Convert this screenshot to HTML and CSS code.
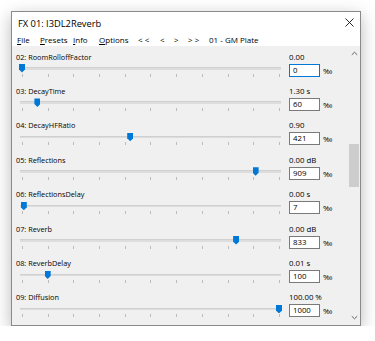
FILE: index.html
```html
<!DOCTYPE html>
<html lang="en">

<head>
    <meta charset="UTF-8">
    <title>FX 01: I3DL2Reverb</title>
    <link rel="stylesheet" href="styles.css">
</head>

<body>
    <!-- Dialog window -->
    <div class="window">
        <div class="titlebar">
            <span class="title">FX 01: I3DL2Reverb</span>
            <svg class="close" width="9" height="9" viewBox="0 0 9 9">
                <path d="M0.5 0.5 L8.5 8.5 M8.5 0.5 L0.5 8.5" stroke="#111" stroke-width="0.9" fill="none" />
            </svg>
        </div>

        <!-- Menu -->
        <div class="menubar">
            <span class="menu-item m-file"><u>F</u>ile</span>
            <span class="menu-item m-presets"><u>P</u>resets</span>
            <span class="menu-item m-info"><u>I</u>nfo</span>
            <span class="menu-item m-options"><u>O</u>ptions</span>
            <span class="menu-item m-prev2">&lt; &lt;</span>
            <span class="menu-item m-prev">&lt;</span>
            <span class="menu-item m-next">&gt;</span>
            <span class="menu-item m-next2">&gt; &gt;</span>
            <span class="menu-item">01 - GM Plate</span>
        </div>

        <!-- Parameters -->
        <div class="content">
            <div class="params">
                <div class="param">
                    <span class="param-name">02: RoomRolloffFactor</span>
                    <span class="param-value">0.00</span>
                    <div class="slider">
                        <div class="track"></div>
                        <div class="ticks"><i></i><i></i><i></i><i></i><i></i><i></i><i></i><i></i><i></i><i></i><i></i></div>
                        <div class="thumb" style="left: -1px"></div>
                    </div>
                    <div class="input focused">0</div>
                    <span class="unit">‰</span>
                </div>
                <div class="param">
                    <span class="param-name">03: DecayTime</span>
                    <span class="param-value">1.30 s</span>
                    <div class="slider">
                        <div class="track"></div>
                        <div class="ticks"><i></i><i></i><i></i><i></i><i></i><i></i><i></i><i></i><i></i><i></i><i></i></div>
                        <div class="thumb" style="left: 14.4px"></div>
                    </div>
                    <div class="input">60</div>
                    <span class="unit">‰</span>
                </div>
                <div class="param">
                    <span class="param-name">04: DecayHFRatio</span>
                    <span class="param-value">0.90</span>
                    <div class="slider">
                        <div class="track"></div>
                        <div class="ticks"><i></i><i></i><i></i><i></i><i></i><i></i><i></i><i></i><i></i><i></i><i></i></div>
                        <div class="thumb" style="left: 107.2px"></div>
                    </div>
                    <div class="input">421</div>
                    <span class="unit">‰</span>
                </div>
                <div class="param">
                    <span class="param-name">05: Reflections</span>
                    <span class="param-value">0.00 dB</span>
                    <div class="slider">
                        <div class="track"></div>
                        <div class="ticks"><i></i><i></i><i></i><i></i><i></i><i></i><i></i><i></i><i></i><i></i><i></i></div>
                        <div class="thumb" style="left: 232.6px"></div>
                    </div>
                    <div class="input">909</div>
                    <span class="unit">‰</span>
                </div>
                <div class="param">
                    <span class="param-name">06: ReflectionsDelay</span>
                    <span class="param-value">0.00 s</span>
                    <div class="slider">
                        <div class="track"></div>
                        <div class="ticks"><i></i><i></i><i></i><i></i><i></i><i></i><i></i><i></i><i></i><i></i><i></i></div>
                        <div class="thumb" style="left: 0.8px"></div>
                    </div>
                    <div class="input">7</div>
                    <span class="unit">‰</span>
                </div>
                <div class="param">
                    <span class="param-name">07: Reverb</span>
                    <span class="param-value">0.00 dB</span>
                    <div class="slider">
                        <div class="track"></div>
                        <div class="ticks"><i></i><i></i><i></i><i></i><i></i><i></i><i></i><i></i><i></i><i></i><i></i></div>
                        <div class="thumb" style="left: 213.1px"></div>
                    </div>
                    <div class="input">833</div>
                    <span class="unit">‰</span>
                </div>
                <div class="param">
                    <span class="param-name">08: ReverbDelay</span>
                    <span class="param-value">0.01 s</span>
                    <div class="slider">
                        <div class="track"></div>
                        <div class="ticks"><i></i><i></i><i></i><i></i><i></i><i></i><i></i><i></i><i></i><i></i><i></i></div>
                        <div class="thumb" style="left: 24.7px"></div>
                    </div>
                    <div class="input">100</div>
                    <span class="unit">‰</span>
                </div>
                <div class="param">
                    <span class="param-name">09: Diffusion</span>
                    <span class="param-value">100.00 %</span>
                    <div class="slider">
                        <div class="track"></div>
                        <div class="ticks"><i></i><i></i><i></i><i></i><i></i><i></i><i></i><i></i><i></i><i></i><i></i></div>
                        <div class="thumb" style="left: 256px"></div>
                    </div>
                    <div class="input">1000</div>
                    <span class="unit">‰</span>
                </div>
            </div>

            <!-- Scrollbar -->
            <div class="scrollbar">
                <svg class="arrow" width="7" height="5" viewBox="0 0 7 5">
                    <path d="M0.8 3.8 L3.5 1.2 L6.2 3.8" stroke="#606060" stroke-width="1" fill="none" />
                </svg>
                <div class="scroll-track">
                    <div class="scroll-thumb"></div>
                </div>
                <svg class="arrow" width="7" height="5" viewBox="0 0 7 5">
                    <path d="M0.8 1.2 L3.5 3.8 L6.2 1.2" stroke="#606060" stroke-width="1" fill="none" />
                </svg>
            </div>
        </div>
    </div>
</body>

</html>
```

FILE: styles.css
```css
/* Reset & Fonts */
* {
    margin: 0;
    padding: 0;
    box-sizing: border-box;
}

body {
    background-color: #ffffff;
    color: #000000;
    font-family: "Open Sans", "Liberation Sans", sans-serif;
    font-size: 7.3px;
    font-weight: 500;
}

/* Window */
.window {
    margin: 11px 0 0 11px;
    width: 350px;
    height: 315px;
    border: 1px solid #8a8a8a;
    background-color: #ffffff;
    box-shadow: 0 5px 16px rgba(0, 0, 0, 0.28);
    display: flex;
    flex-direction: column;
}

.titlebar {
    height: 21px;
    display: flex;
    align-items: center;
    justify-content: space-between;
    padding: 0 6px 0 6px;
}

.title {
    font-size: 9.3px;
    padding-top: 1px;
}

.close {
    display: block;
    margin-top: -1px;
}

/* Menu */
.menubar {
    height: 13px;
    display: flex;
    align-items: center;
    padding-left: 5px;
    font-size: 8px;
}

.menu-item {
    white-space: nowrap;
}

.menu-item u {
    text-decoration-thickness: 0.7px;
    text-underline-offset: 1px;
}

.m-file { width: 23px; }
.m-presets { width: 33px; }
.m-info { width: 26px; }
.m-options { width: 39px; }
.m-prev2 { width: 22px; }
.m-prev { width: 14px; }
.m-next { width: 14px; }
.m-next2 { width: 21px; }

/* Content */
.content {
    flex: 1;
    display: flex;
    background-color: #f0f0f0;
    overflow: hidden;
}

.params {
    flex: 1;
    padding: 5.5px 0 0 4px;
    overflow: hidden;
}

.param {
    height: 34.43px;
    display: grid;
    grid-template-columns: 273px 31px auto;
    grid-template-rows: 12px 13px;
}

.param-name {
    line-height: 11px;
    white-space: nowrap;
}

.param-value {
    grid-column: 2 / 4;
    line-height: 11px;
    white-space: nowrap;
    font-size: 7.8px;
}

/* Slider */
.slider {
    position: relative;
    margin-left: 4px;
    width: 261px;
}

.track {
    margin-top: 3.5px;
    height: 2.5px;
    background-color: #dddddd;
    border-top: 1px solid #d0d0d0;
}

.ticks {
    margin-top: 4px;
    height: 3px;
    padding: 0 1px 0 2px;
    display: flex;
    justify-content: space-between;
}

.ticks i {
    display: block;
    width: 1px;
    height: 3px;
    background-color: #bcbcbc;
}

.thumb {
    position: absolute;
    top: 0.5px;
    width: 6px;
    height: 8.5px;
    background-color: #0078d7;
    clip-path: polygon(0 0, 100% 0, 100% 65%, 50% 100%, 0 65%);
}

/* Edit box */
.input {
    height: 13px;
    background-color: #ffffff;
    border: 1px solid #7a7a7a;
    padding-left: 3px;
    line-height: 11px;
    font-size: 7.8px;
}

.input.focused {
    border-color: #0078d7;
}

.unit {
    padding-left: 3px;
    line-height: 14px;
    font-size: 8px;
}

/* Scrollbar */
.scrollbar {
    width: 12px;
    display: flex;
    flex-direction: column;
    align-items: center;
    background-color: #f0f0f0;
}

.arrow {
    display: block;
    margin: 5px 0;
}

.scroll-track {
    flex: 1;
    width: 100%;
    padding-top: 83px;
}

.scroll-thumb {
    height: 43px;
    margin: 0 1px;
    background-color: #cdcdcd;
}
```
